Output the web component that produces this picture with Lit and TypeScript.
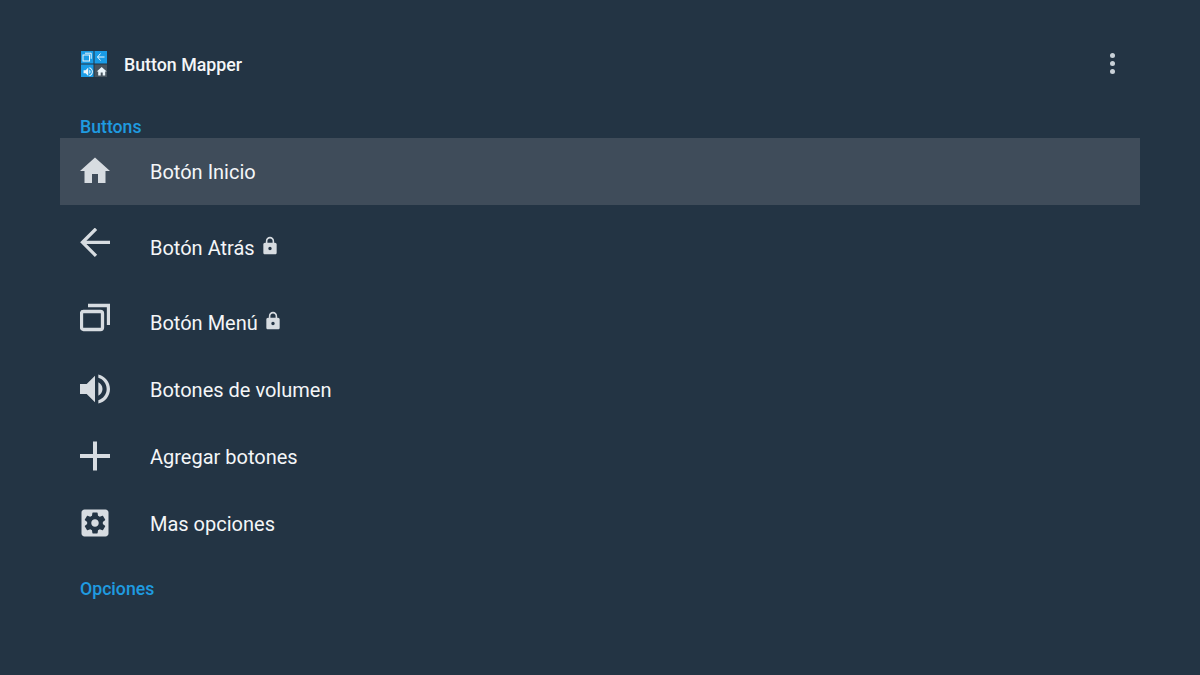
import { LitElement, html, css, svg } from "lit";
import { customElement } from "lit/decorators.js";

const lock = html`<svg class="lock" viewBox="0 0 24 24"><path d="M18 8h-1V6c0-2.76-2.24-5-5-5S7 3.24 7 6v2H6c-1.1 0-2 .9-2 2v10c0 1.1.9 2 2 2h12c1.1 0 2-.9 2-2V10c0-1.1-.9-2-2-2zm-6 9c-1.1 0-2-.9-2-2s.9-2 2-2 2 .9 2 2-.9 2-2 2zm3.1-9H8.9V6c0-1.71 1.39-3.1 3.1-3.1 1.71 0 3.1 1.39 3.1 3.1v2z"/></svg>`;

const home = "M10 20v-6h4v6h5v-8h3L12 3 2 12h3v8z";
const volume = "M3 9v6h4l5 5V4L7 9H3zm13.5 3c0-1.77-1.02-3.29-2.5-4.03v8.05c1.48-.73 2.5-2.25 2.5-4.02zM14 3.23v2.06c2.89.86 5 3.54 5 6.71s-2.11 5.85-5 6.71v2.06c4.01-.91 7-4.49 7-8.77s-2.99-7.86-7-8.77z";
const gear = "M19 3H5c-1.1 0-2 .9-2 2v14c0 1.1.9 2 2 2h14c1.1 0 2-.9 2-2V5c0-1.1-.9-2-2-2zm-1.75 9c0 .23-.02.46-.05.68l1.48 1.16c.13.11.17.3.08.45l-1.4 2.42c-.09.15-.27.21-.43.15l-1.74-.7c-.36.28-.76.51-1.18.69l-.26 1.85c-.03.17-.18.3-.35.3h-2.8c-.17 0-.32-.13-.35-.29l-.26-1.85c-.43-.18-.82-.41-1.18-.69l-1.74.7c-.16.06-.34 0-.43-.15l-1.4-2.42c-.09-.15-.05-.34.08-.45l1.48-1.16c-.03-.23-.05-.46-.05-.69 0-.23.02-.46.05-.68l-1.48-1.16c-.13-.11-.17-.3-.08-.45l1.4-2.42c.09-.15.27-.21.43-.15l1.74.7c.36-.28.76-.51 1.18-.69l.26-1.85c.03-.17.18-.3.35-.3h2.8c.17 0 .32.13.35.29l.26 1.85c.43.18.82.41 1.18.69l1.74-.7c.16-.06.34 0 .43.15l1.4 2.42c.09.15.05.34-.08.45l-1.48 1.16c.03.23.05.46.05.69zM12 9.5c-1.38 0-2.5 1.12-2.5 2.5s1.12 2.5 2.5 2.5 2.5-1.12 2.5-2.5-1.12-2.5-2.5-2.5z";

const icons = {
  home: html`<svg class="ic" viewBox="2 2.6 20 20"><path d=${home}/></svg>`,
  back: html`<svg class="ic" viewBox="0 0.7 30 30"><path class="st" d="M16 1.5 2.5 15 16 28.5M2.5 15H30"/></svg>`,
  menu: html`<svg class="ic" viewBox="0 0 30 30"><rect class="st" x="1.5" y="8.5" width="21" height="18" rx="2"/><path class="st" d="M8 2.5h20.5V22"/></svg>`,
  volume: html`<svg class="ic" viewBox="3 3 18 18"><path d=${volume}/></svg>`,
  plus: html`<svg class="ic" viewBox="0 0 30 30"><path d="M13 0.5h4V13h13v4H17v12.5h-4V17H0v-4h13z"/></svg>`,
  gear: html`<svg class="ic" viewBox="2 2 20 20"><path d=${gear}/></svg>`,
};

const items = [
  { icon: icons.home, label: "Botón Inicio", selected: true },
  { icon: icons.back, label: "Botón Atrás", locked: true },
  { icon: icons.menu, label: "Botón Menú", locked: true },
  { icon: icons.volume, label: "Botones de volumen" },
  { icon: icons.plus, label: "Agregar botones" },
  { icon: icons.gear, label: "Mas opciones" },
];

const logo = html`<svg class="logo" viewBox="0 0 28 28">
  <rect x="1" y="1" width="12.5" height="12.5" fill="#1a9ce6"/>
  <rect x="14.5" y="1" width="12.5" height="12.5" fill="#1a9ce6"/>
  <rect x="1" y="14.5" width="12.5" height="12.5" fill="#1a9ce6"/>
  <rect x="14.5" y="14.5" width="12.5" height="12.5" fill="#47545f"/>
  ${svg`<g fill="none" stroke="#eaf4fa" stroke-width="1">
    <rect x="3" y="5" width="6.5" height="6"/><path d="M5 3.2h6.2v5.6"/>
    <path d="M20.5 3.5 17.5 7l3 3.5M17.5 7h7"/>
  </g>
  <g fill="#eaf4fa">
    <path transform="translate(2 15.5) scale(.52)" d=${volume}/>
    <path transform="translate(15.7 15.6) scale(.5)" d=${home}/>
  </g>`}
</svg>`;

@customElement("app-root")
export class AppRoot extends LitElement {
  static styles = css`
    :host {
      display: block;
      width: 1200px;
      height: 675px;
      box-sizing: border-box;
      padding: 50px 60px 0;
      background: #233444;
      font-family: Roboto, "Liberation Sans", sans-serif;
      overflow: hidden;
    }
    .header {
      display: flex;
      align-items: center;
      height: 28px;
      padding: 0 25px 0 20px;
    }
    .logo { width: 28px; height: 28px; flex: none; }
    .title {
      margin-left: 16px;
      font-size: 17.8px;
      font-weight: 500;
      color: #f4f6f8;
    }
    .dots {
      margin-left: auto;
      margin-top: -1px;
      display: flex;
      flex-direction: column;
      gap: 3px;
    }
    .dots span {
      width: 5px;
      height: 5px;
      border-radius: 50%;
      background: #c9d1d8;
    }
    .section {
      padding-left: 20px;
      font-size: 17.7px;
      line-height: 20px;
      font-weight: 500;
      color: #1f9be0;
    }
    .buttons { margin-top: 39px; }
    .options { margin-top: 23px; }
    .list { margin-top: 1px; }
    .row {
      display: flex;
      align-items: center;
      height: 67px;
      padding-left: 20px;
      color: #f4f6f8;
    }
    .row.selected { background: #3f4c5a; }
    .row.locked { height: 75px; }
    .ic { width: 30px; height: 30px; flex: none; fill: #d7dce1; }
    .st {
      fill: none;
      stroke: #d7dce1;
      stroke-width: 3.3;
    }
    .label {
      display: flex;
      align-items: center;
      margin-left: 40px;
      font-size: 20px;
      line-height: 24px;
    }
    .row .label { padding-top: 2px; }
    .row.selected .label { padding-top: 0; }
    .row.locked .label { padding-top: 10px; }
    .lock {
      width: 20px;
      height: 20px;
      margin: -4px 0 0 5px;
      fill: #d7dce1;
    }
  `;

  render() {
    return html`
      <div class="header">
        ${logo}
        <div class="title">Button Mapper</div>
        <div class="dots"><span></span><span></span><span></span></div>
      </div>
      <div class="section buttons">Buttons</div>
      <div class="list">
        ${items.map(
          (i) => html`<div class="row ${i.selected ? "selected" : ""} ${i.locked ? "locked" : ""}">
            ${i.icon}
            <div class="label">${i.label}${i.locked ? lock : ""}</div>
          </div>`
        )}
      </div>
      <div class="section options">Opciones</div>
    `;
  }
}
